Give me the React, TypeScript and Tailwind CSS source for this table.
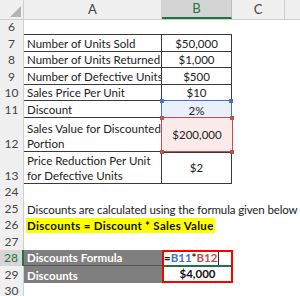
const font = { fontFamily: "Lato, 'Open Sans', sans-serif" };

const ROW_HEAD = "w-[24px] shrink-0 bg-[#f0f0f0] border-r border-[#cfcfcf] flex items-end justify-center text-[12px] text-[#444] leading-[15px]";

function RowNum({ n, active = false }: { n: number; active?: boolean }) {
  return (
    <div
      className={
        active
          ? "w-[24px] shrink-0 bg-[#d6d6d6] border-r-2 border-[#217346] flex items-end justify-center text-[12px] text-[#217346] leading-[15px]"
          : ROW_HEAD
      }
    >
      <span className="pb-[1px]">{n}</span>
    </div>
  );
}

function Handle({ pos, color }: { pos: string; color: string }) {
  return <span className={`absolute h-[4px] w-[4px] ${pos} ${color}`} />;
}

function TableRow({ n, label, value }: { n: number; label: string; value: string }) {
  return (
    <div className="flex h-[16.5px]">
      <RowNum n={n} />
      <div className="w-[138px] shrink-0 overflow-hidden whitespace-nowrap border-r border-b border-[#3a3a3a] px-[3px] flex items-end text-[11.5px] leading-[15px] text-[#222]">
        {label}
      </div>
      <div className="w-[70px] shrink-0 border-r border-b border-[#3a3a3a] flex items-end justify-center text-[11.5px] leading-[15px] text-[#222]">
        {value}
      </div>
    </div>
  );
}

export default function App() {
  return (
    <div className="w-[300px] h-[296px] overflow-hidden bg-white" style={font}>
      {/* column headers */}
      <div className="flex h-[20px] bg-[#f0f0f0] border-b border-[#cfcfcf]">
        <div className="relative w-[24px] shrink-0 border-r border-[#cfcfcf]">
          <div className="absolute right-[2px] bottom-[2px] h-0 w-0 border-l-[11px] border-b-[11px] border-l-transparent border-b-[#b4b4b4]" />
        </div>
        <div className="w-[138px] shrink-0 border-r border-[#cfcfcf] flex items-center justify-center text-[13px] text-[#444]">A</div>
        <div className="w-[70px] shrink-0 bg-[#d4d4d4] border-r border-[#bdbdbd] border-b-2 border-b-[#217346] flex items-center justify-center text-[13px] text-[#217346]">B</div>
        <div className="w-[53px] shrink-0 border-r border-[#cfcfcf] flex items-center justify-center text-[13px] text-[#444]">C</div>
        <div className="flex-1" />
      </div>

      {/* row 6 */}
      <div className="flex h-[15px]">
        <RowNum n={6} />
        <div className="w-[208px] shrink-0 border-b border-[#3a3a3a]" />
      </div>

      <TableRow n={7} label="Number of Units Sold" value="$50,000" />
      <TableRow n={8} label="Number of Units Returned" value="$1,000" />
      <TableRow n={9} label="Number of Defective Units" value="$500" />
      <TableRow n={10} label="Sales Price Per Unit" value="$10" />

      {/* row 11 */}
      <div className="flex h-[16.5px]">
        <RowNum n={11} />
        <div className="w-[138px] shrink-0 border-r border-b border-[#3a3a3a] px-[3px] flex items-end text-[11.5px] leading-[15px] text-[#222]">Discount</div>
        <div className="relative w-[70px] shrink-0 bg-[#e9f0fa] border-r border-[#3a3a3a] flex items-end justify-center text-[11.5px] leading-[15px] text-[#222]">
          <div className="absolute -left-px -top-px right-[-1px] bottom-0 border border-[#4472c4]" />
          <Handle pos="-left-[2px] -top-[2px]" color="bg-[#4472c4]" />
          <Handle pos="-right-[2px] -top-[2px]" color="bg-[#4472c4]" />
          <span className="relative">2%</span>
        </div>
      </div>

      {/* row 12 */}
      <div className="flex h-[34.5px]">
        <RowNum n={12} />
        <div className="w-[138px] shrink-0 overflow-hidden border-r border-b border-[#3a3a3a] px-[3px] flex flex-col justify-end text-[11.5px] leading-[15px] text-[#222]">
          <span className="whitespace-nowrap">Sales Value for Discounted</span>
          <span>Portion</span>
        </div>
        <div className="relative w-[70px] shrink-0 bg-[#fbeaea] flex items-center justify-center text-[11.5px] leading-[15px] text-[#222]">
          <div className="absolute -left-px -top-px right-[-1px] bottom-0 border border-[#c0504d]" />
          <Handle pos="-left-[2px] -top-[2px]" color="bg-[#c0504d]" />
          <Handle pos="-right-[2px] -top-[2px]" color="bg-[#c0504d]" />
          <Handle pos="-left-[2px] -bottom-[2px]" color="bg-[#c0504d]" />
          <Handle pos="-right-[2px] -bottom-[2px]" color="bg-[#c0504d]" />
          <span className="relative">$200,000</span>
        </div>
      </div>

      {/* row 13 */}
      <div className="flex h-[31.5px]">
        <RowNum n={13} />
        <div className="w-[138px] shrink-0 overflow-hidden border-r border-b border-[#3a3a3a] px-[3px] flex flex-col justify-end text-[11.5px] leading-[15px] text-[#222]">
          <span className="whitespace-nowrap">Price Reduction Per Unit</span>
          <span>for Defective Units</span>
        </div>
        <div className="w-[70px] shrink-0 border-t border-r border-b border-[#3a3a3a] flex items-center justify-center text-[11.5px] leading-[15px] text-[#222]">$2</div>
      </div>

      {/* row 24 */}
      <div className="flex h-[16.5px]">
        <RowNum n={24} />
      </div>

      {/* row 25 */}
      <div className="flex h-[16.5px]">
        <RowNum n={25} />
        <div className="px-[3px] flex items-end whitespace-nowrap text-[11.5px] leading-[15px] tracking-[-0.12px] text-[#222]">
          Discounts are calculated using the formula given below
        </div>
      </div>

      {/* row 26 */}
      <div className="flex h-[16.5px]">
        <RowNum n={26} />
        <div className="pl-[2px] flex items-end whitespace-nowrap text-[11.5px] leading-[15px] tracking-[0.3px] text-[#111] font-bold">
          <span className="bg-[#ffff00] px-[1px]">Discounts = Discount * Sales Value</span>
        </div>
      </div>

      {/* row 27 */}
      <div className="flex h-[16.5px]">
        <RowNum n={27} />
      </div>

      {/* rows 28 - 29 */}
      <div className="flex">
        <div className="flex flex-col">
          <div className="flex h-[16.5px]">
            <RowNum n={28} active />
            <div className="w-[138px] shrink-0 bg-[#7f7f7f] border-b border-[#555] px-[3px] flex items-end text-[11.5px] leading-[15px] text-white font-bold">
              Discounts Formula
            </div>
          </div>
          <div className="flex h-[16.5px]">
            <RowNum n={29} />
            <div className="w-[138px] shrink-0 bg-[#7f7f7f] px-[3px] flex items-end text-[11.5px] leading-[15px] text-white font-bold">
              Discounts
            </div>
          </div>
        </div>
        <div className="w-[71px] h-[33px] shrink-0 border-2 border-[#ff0000] flex flex-col">
          <div className="h-[15px] border-b-2 border-[#217346] flex items-end text-[11.5px] leading-[14px] font-bold">
            <span className="text-[#222]">=</span>
            <span className="text-[#4472c4]">B11</span>
            <span className="text-[#222]">*</span>
            <span className="text-[#c0504d]">B12</span>
            <span className="ml-[1px] h-[13px] w-px bg-[#222]" />
          </div>
          <div className="flex-1 flex items-end justify-center text-[11.5px] leading-[14px] font-bold text-[#111]">$4,000</div>
        </div>
      </div>

      {/* row 30 */}
      <div className="flex h-[16.5px]">
        <RowNum n={30} />
      </div>
    </div>
  );
}
